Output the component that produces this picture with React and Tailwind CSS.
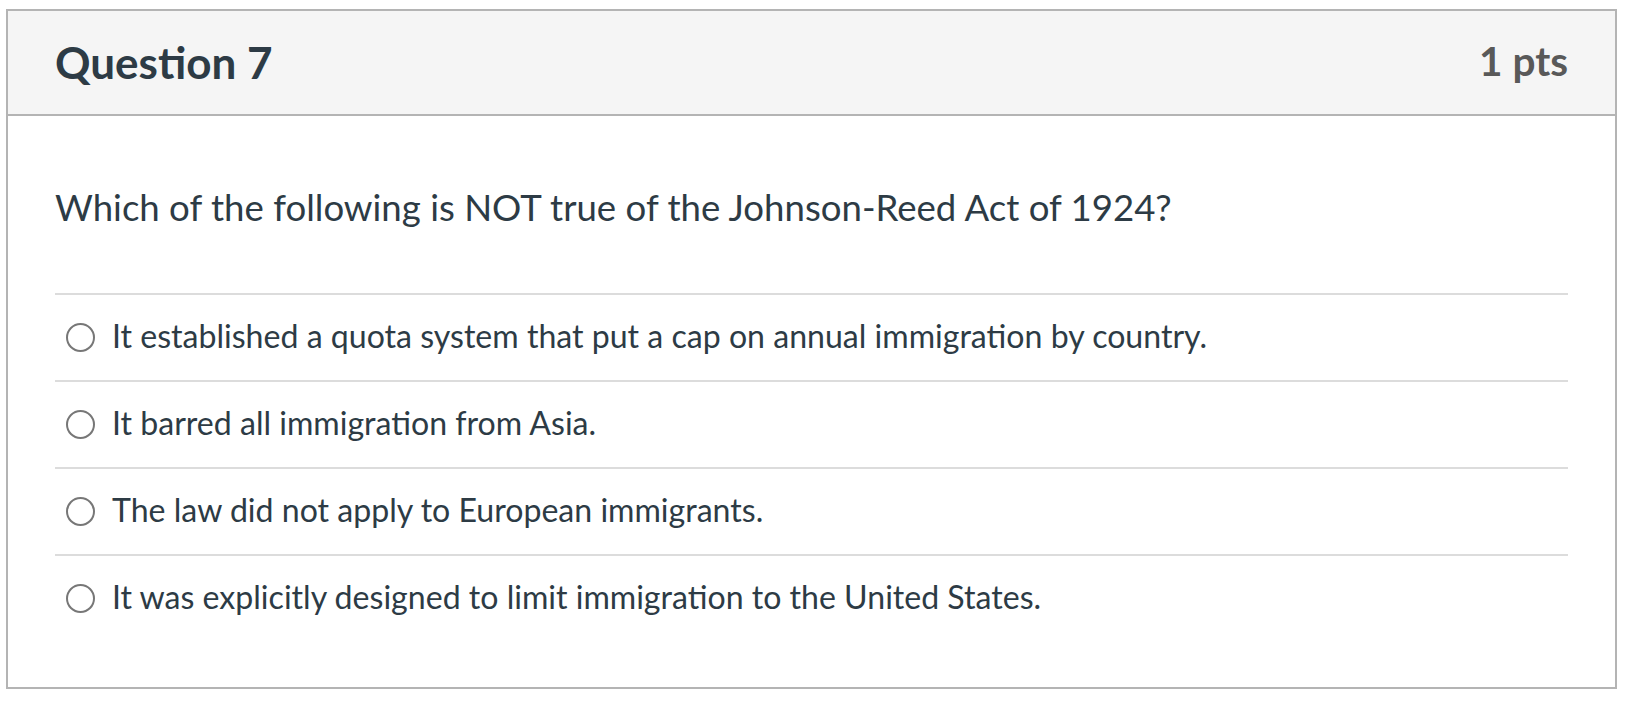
export default function App() {
    const options = [
        "It established a quota system that put a cap on annual immigration by country.",
        "It barred all immigration from Asia.",
        "The law did not apply to European immigrants.",
        "It was explicitly designed to limit immigration to the United States.",
    ];

    return (
        <div className="min-h-screen bg-white pt-[9px] pl-[6px]" style={{ fontFamily: "Lato, 'Open Sans', sans-serif" }}>
            <div className="w-[1611px] h-[680px] border-2 border-[#b4b4b4] flex flex-col">
                {/* header */}
                <div className="h-[105px] shrink-0 bg-[#f5f5f5] border-b-2 border-[#b4b4b4] px-[47px] flex items-center justify-between">
                    <h2 className="text-[44px] font-bold text-[#2d3b45] leading-none pb-[2px]">Question 7</h2>
                    <span className="text-[40.5px] font-bold text-[#595959] leading-none pb-[2px]">1 pts</span>
                </div>

                {/* body */}
                <div className="px-[47px] pt-[64px]">
                    <p className="text-[36.6px] leading-[54px] text-[#2d3b45]">
                        Which of the following is NOT true of the Johnson-Reed Act of 1924?
                    </p>

                    <div className="mt-[59px]">
                        {options.map((opt, i) => (
                            <label
                                key={i}
                                className="h-[87px] border-t-2 border-[#dcdcdc] flex items-center cursor-pointer"
                            >
                                <span className="ml-[11px] w-[29px] h-[29px] rounded-full border-2 border-[#777777] bg-white shrink-0"></span>
                                <span className="ml-[17px] text-[32.1px] text-[#2d3b45] leading-none pb-[2px]">{opt}</span>
                            </label>
                        ))}
                    </div>
                </div>
            </div>
        </div>
    );
}
